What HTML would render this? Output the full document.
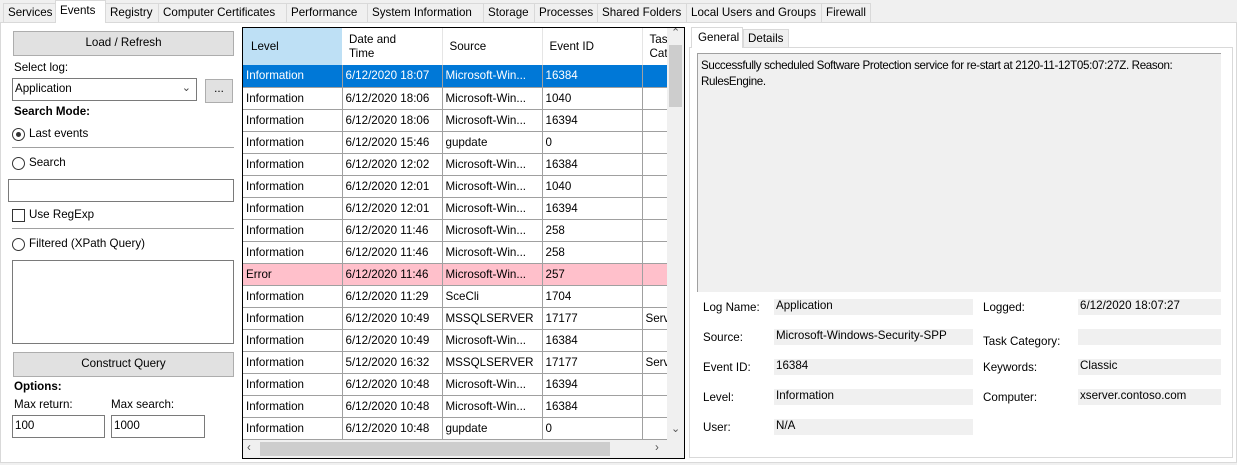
<!DOCTYPE html>
<html><head><style>
*{box-sizing:border-box;margin:0;padding:0}
body{width:1237px;height:465px;background:#f0f0f0;font-family:"Liberation Sans",sans-serif;font-size:11.6px;color:#000;position:relative;overflow:hidden}
.a{position:absolute;white-space:nowrap}
.tab{position:absolute;top:3px;height:19px;border:1px solid #d9d9d9;border-bottom:none;background:#f0f0f0;padding:2px 0 0 4px}
.btn{position:absolute;background:#e1e1e1;border:1px solid #adadad;text-align:center;line-height:22px}
.inp{position:absolute;background:#fff;border:1px solid #7a7a7a;padding:3px 2px}
.radio{position:absolute;width:13px;height:13px;border:1px solid #333;border-radius:50%;background:#fff}
.hl{position:absolute;height:1px;background:#a0a0a0}
table{border-collapse:collapse;table-layout:fixed}
td{height:22px;border-right:1px solid #a0a0a0;border-bottom:1px solid #a0a0a0;padding:0 3px;white-space:nowrap;overflow:hidden}
.val{position:absolute;background:#f0f0f0;height:16px;padding-left:2px;line-height:14px}
</style></head><body>
<div class="a" style="left:0;top:22px;width:1237px;height:441px;background:#fff;border:1px solid #d9d9d9"></div>
<div class="tab" style="left:3px;width:53px">Services</div>
<div class="tab" style="left:55px;top:0;height:23px;width:51px;background:#fff;z-index:2;padding-top:3px">Events</div>
<div class="tab" style="left:105px;width:54px">Registry</div>
<div class="tab" style="left:158px;width:129px">Computer Certificates</div>
<div class="tab" style="left:286px;width:82px">Performance</div>
<div class="tab" style="left:367px;width:117px">System Information</div>
<div class="tab" style="left:483px;width:52px">Storage</div>
<div class="tab" style="left:534px;width:64px">Processes</div>
<div class="tab" style="left:597px;width:90px">Shared Folders</div>
<div class="tab" style="left:686px;width:136px">Local Users and Groups</div>
<div class="tab" style="left:821px;width:50px">Firewall</div>

<div class="btn" style="left:13px;top:31px;width:221px;height:25px">Load / Refresh</div>
<div class="a" style="left:14px;top:61px">Select log:</div>
<div class="inp" style="left:12px;top:78px;width:185px;height:23px;border-color:#7a7a7a">Application<span style="position:absolute;right:5px;top:2px;font-size:11px;color:#444">&#8964;</span></div>
<div class="btn" style="left:205px;top:79px;width:28px;height:24px;line-height:18px">...</div>
<div class="a" style="left:14px;top:105px;font-weight:bold">Search Mode:</div>
<div class="radio" style="left:12px;top:128px"><div style="position:absolute;left:3px;top:3px;width:5px;height:5px;border-radius:50%;background:#333"></div></div>
<div class="a" style="left:29px;top:127px">Last events</div>
<div class="hl" style="left:12px;top:147px;width:222px"></div>
<div class="radio" style="left:12px;top:157px"></div>
<div class="a" style="left:29px;top:156px">Search</div>
<div class="inp" style="left:8px;top:179px;width:226px;height:23px"></div>
<div class="a" style="left:12px;top:209px;width:13px;height:13px;border:1px solid #333;background:#fff"></div>
<div class="a" style="left:29px;top:208px">Use RegExp</div>
<div class="hl" style="left:12px;top:228px;width:222px"></div>
<div class="radio" style="left:12px;top:238px"></div>
<div class="a" style="left:29px;top:237px">Filtered (XPath Query)</div>
<div class="inp" style="left:12px;top:260px;width:222px;height:84px"></div>
<div class="btn" style="left:13px;top:352px;width:221px;height:25px">Construct Query</div>
<div class="a" style="left:14px;top:380px;font-weight:bold">Options:</div>
<div class="a" style="left:14px;top:398px">Max return:</div>
<div class="a" style="left:111px;top:398px">Max search:</div>
<div class="inp" style="left:12px;top:415px;width:93px;height:23px">100</div>
<div class="inp" style="left:111px;top:415px;width:94px;height:23px">1000</div>

<div class="a" style="left:242px;top:27px;width:443px;height:432px;border:1px solid #000;background:#fff;overflow:hidden">
<table style="width:424px">
<colgroup><col style="width:99px"><col style="width:100px"><col style="width:100px"><col style="width:100px"><col style="width:25px"></colgroup>
<tr style="height:37px"><td style="background:#bee0f5;border:none;padding-left:8px">Level</td><td style="border-right:1px solid #e5e5e5;border-bottom:none;padding-left:7px;line-height:14px">Date and<br>Time</td><td style="border-right:1px solid #e5e5e5;border-bottom:none;padding-left:7px">Source</td><td style="border-right:1px solid #e5e5e5;border-bottom:none;padding-left:7px">Event ID</td><td style="border:none;padding-left:7px;line-height:14px">Task<br>Cat</td></tr>
<tr style="background:#0078d7;color:#fff"><td>Information</td><td>6/12/2020 18:07</td><td>Microsoft-Win...</td><td>16384</td><td></td></tr>
<tr><td>Information</td><td>6/12/2020 18:06</td><td>Microsoft-Win...</td><td>1040</td><td></td></tr>
<tr><td>Information</td><td>6/12/2020 18:06</td><td>Microsoft-Win...</td><td>16394</td><td></td></tr>
<tr><td>Information</td><td>6/12/2020 15:46</td><td>gupdate</td><td>0</td><td></td></tr>
<tr><td>Information</td><td>6/12/2020 12:02</td><td>Microsoft-Win...</td><td>16384</td><td></td></tr>
<tr><td>Information</td><td>6/12/2020 12:01</td><td>Microsoft-Win...</td><td>1040</td><td></td></tr>
<tr><td>Information</td><td>6/12/2020 12:01</td><td>Microsoft-Win...</td><td>16394</td><td></td></tr>
<tr><td>Information</td><td>6/12/2020 11:46</td><td>Microsoft-Win...</td><td>258</td><td></td></tr>
<tr><td>Information</td><td>6/12/2020 11:46</td><td>Microsoft-Win...</td><td>258</td><td></td></tr>
<tr style="background:#ffc0cb"><td>Error</td><td>6/12/2020 11:46</td><td>Microsoft-Win...</td><td>257</td><td></td></tr>
<tr><td>Information</td><td>6/12/2020 11:29</td><td>SceCli</td><td>1704</td><td></td></tr>
<tr><td>Information</td><td>6/12/2020 10:49</td><td>MSSQLSERVER</td><td>17177</td><td>Serv</td></tr>
<tr><td>Information</td><td>6/12/2020 10:49</td><td>Microsoft-Win...</td><td>16384</td><td></td></tr>
<tr><td>Information</td><td>5/12/2020 16:32</td><td>MSSQLSERVER</td><td>17177</td><td>Serv</td></tr>
<tr><td>Information</td><td>6/12/2020 10:48</td><td>Microsoft-Win...</td><td>16394</td><td></td></tr>
<tr><td>Information</td><td>6/12/2020 10:48</td><td>Microsoft-Win...</td><td>16384</td><td></td></tr>
<tr><td>Information</td><td>6/12/2020 10:48</td><td>gupdate</td><td>0</td><td></td></tr>
</table>
<div class="a" style="left:424px;top:0;width:17px;height:412px;background:#f0f0f0"><div class="a" style="left:4px;top:-2px;font-size:11px;color:#555">&#8963;</div><div class="a" style="left:2px;top:17px;width:13px;height:62px;background:#cdcdcd"></div><div class="a" style="left:4px;top:394px;font-size:11px;color:#555">&#8964;</div></div>
<div class="a" style="left:0;top:412px;width:441px;height:18px;background:#f0f0f0"><div class="a" style="left:4px;top:1px;color:#555">&#8249;</div><div class="a" style="left:17px;top:2px;width:350px;height:14px;background:#cdcdcd"></div><div class="a" style="left:412px;top:1px;color:#555">&#8250;</div></div>
<div class="a" style="left:424px;top:412px;width:17px;height:18px;background:#f0f0f0"></div>
</div>

<div class="a" style="left:689px;top:47px;width:544px;height:411px;border:1px solid #d9d9d9;background:#fff"></div>
<div class="tab" style="left:691px;top:27px;height:21px;width:52px;background:#fff;z-index:2;padding:3px 0 0 6px">General</div>
<div class="tab" style="left:743px;top:29px;height:18px;width:46px;padding:2px 0 0 4px">Details</div>
<div class="a" style="left:697px;top:53px;width:524px;height:239px;background:#f0f0f0;border-top:1px solid #a0a0a0;border-left:1px solid #a0a0a0;padding:4px 3px;white-space:normal;line-height:16px;letter-spacing:-0.35px">Successfully scheduled Software Protection service for re-start at 2120-11-12T05:07:27Z. Reason: RulesEngine.</div>
<div class="a" style="left:703px;top:301px">Log Name:</div>
<div class="a" style="left:703px;top:331px">Source:</div>
<div class="a" style="left:703px;top:361px">Event ID:</div>
<div class="a" style="left:703px;top:391px">Level:</div>
<div class="a" style="left:703px;top:421px">User:</div>
<div class="val" style="left:774px;top:299px;width:199px">Application</div>
<div class="val" style="left:774px;top:329px;width:199px">Microsoft-Windows-Security-SPP</div>
<div class="val" style="left:774px;top:359px;width:199px">16384</div>
<div class="val" style="left:774px;top:389px;width:199px">Information</div>
<div class="val" style="left:774px;top:419px;width:199px">N/A</div>
<div class="a" style="left:983px;top:301px">Logged:</div>
<div class="a" style="left:983px;top:335px">Task Category:</div>
<div class="a" style="left:983px;top:361px">Keywords:</div>
<div class="a" style="left:983px;top:391px">Computer:</div>
<div class="val" style="left:1078px;top:299px;width:143px">6/12/2020 18:07:27</div>
<div class="val" style="left:1078px;top:329px;width:143px"></div>
<div class="val" style="left:1078px;top:359px;width:143px">Classic</div>
<div class="val" style="left:1078px;top:389px;width:143px">xserver.contoso.com</div>
</body></html>
